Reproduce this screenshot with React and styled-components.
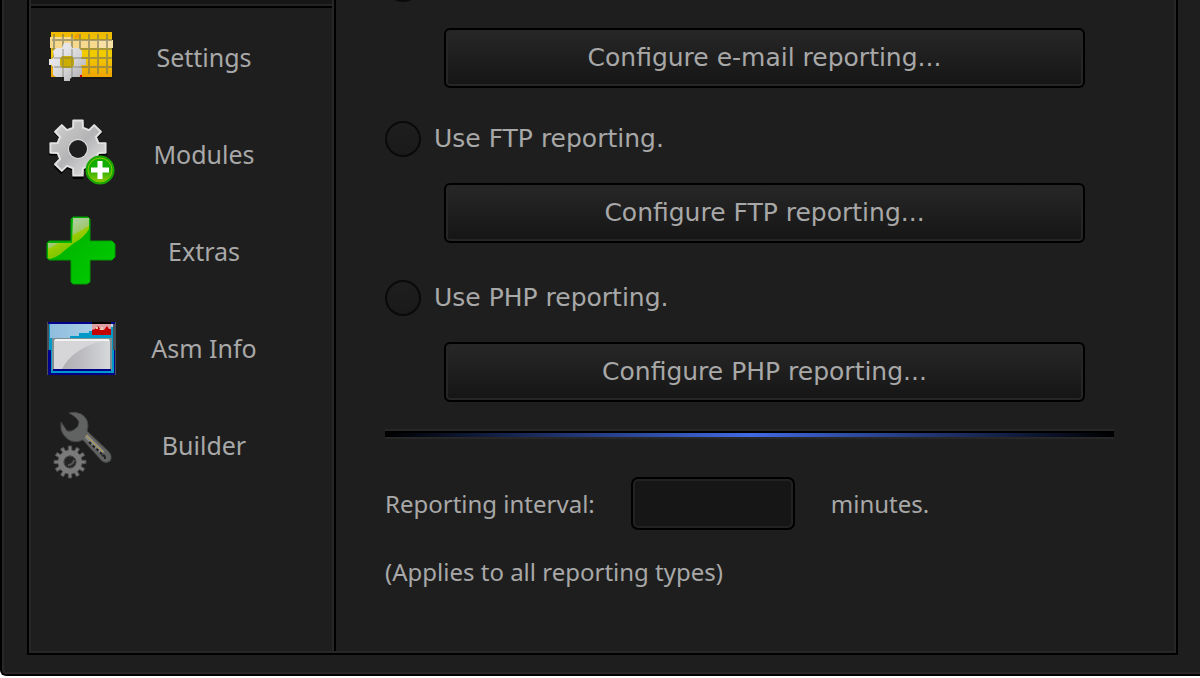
import React, { useState } from 'react'
import styled, { createGlobalStyle } from 'styled-components'

const GlobalStyle = createGlobalStyle`
  * {
    box-sizing: border-box;
  }

  body {
    margin: 0;
    background: #fff;
    color: #a8a8a8;
    font-family: "Noto Sans", "Open Sans", sans-serif;
    font-size: 24px;
    line-height: 34px;
    overflow: hidden;
  }
`;

const Window = styled.div`
  padding: 0 22px 19px 25px;
  background: #1e1e1e;
  border-left: 2px solid #000;
  border-bottom: 2px solid #000;
  border-bottom-left-radius: 6px;
  box-shadow: inset 2px -2px 0 #272727;
`;

const Panel = styled.div`
  display: flex;
  border: 2px solid #000;
  border-top: none;
`;

const Sidebar = styled.nav`
  flex: 0 0 305px;
  border: 2px solid #272727;
  border-top: none;
  box-shadow: 2px 0 0 #000;
`;

const PreviousTab = styled.div`
  height: 8px;
  background: #161616;
  border-bottom: 2px solid #000;
  box-shadow: inset 0 -2px 0 #242424;
`;

const Tab = styled.button`
  display: grid;
  grid-template-columns: 100px 146px;
  align-items: center;
  justify-items: center;
  width: 100%;
  height: 97px;
  padding: 0;
  border: none;
  background: none;
  color: inherit;
  font: inherit;
  font-size: 25px;
  cursor: pointer;
`;

const TabIcon = styled.svg`
  width: 72px;
  height: 72px;
`;

const Content = styled.main`
  flex: 1;
  display: flex;
  flex-direction: column;
  padding: 0 60px 62px 51px;
  border-right: 2px solid #272727;
  border-bottom: 2px solid #272727;
`;

const Option = styled.label`
  display: flex;
  align-items: center;
  gap: 13px;
  height: 36px;
  margin-top: ${(props) => props.$gap}px;
  font-family: "DejaVu Sans", sans-serif;
  font-size: 25px;
`;

const Radio = styled.input`
  appearance: none;
  width: 36px;
  height: 36px;
  margin: 0;
  border: 2px solid #0a0a0a;
  border-radius: 50%;
  background: linear-gradient(#1e1e1e, #1a1a1a);

  &:checked {
    background: radial-gradient(#4169e1 30%, #1a1a1a 40%);
  }
`;

const ConfigureButton = styled.button`
  height: 60px;
  margin: 26px 29px 0 59px;
  padding: 0 0 2px;
  border: 2px solid #000;
  border-radius: 6px;
  background: linear-gradient(#272727, #151515);
  box-shadow: inset 0 0 0 2px #262626;
  color: inherit;
  font-family: "DejaVu Sans", sans-serif;
  font-size: 25px;
  cursor: pointer;

  &:active {
    background: #151515;
  }
`;

const Divider = styled.hr`
  width: 100%;
  height: 10px;
  margin: 27px 0 0;
  border: 2px solid #272727;
  border-width: 2px 0;
  background: linear-gradient(#000, #000) top / 100% 2px no-repeat,
    linear-gradient(90deg, #000, #4169e1 50%, #000);
`;

const IntervalRow = styled.div`
  display: flex;
  align-items: center;
  gap: 36px;
  margin-top: 38px;
`;

const IntervalInput = styled.input`
  width: 164px;
  height: 53px;
  padding: 0 12px;
  border: 2px solid #000;
  border-radius: 7px;
  background: #161616;
  box-shadow: inset 0 0 0 2px #222;
  color: inherit;
  font: inherit;
  outline: none;
`;

const Note = styled.p`
  margin: 25px 0 0;
`;

// outline of a cog, four points for each tooth
const cog = (cx, cy, outer, inner, teeth, spread) => {
  const points = []
  const step = (Math.PI * 2) / teeth
  for (let i = 0; i < teeth; i++) {
    const mid = i * step - Math.PI / 2
    const corners = [
      [inner, -spread * 1.1],
      [outer, -spread * 0.8],
      [outer, spread * 0.8],
      [inner, spread * 1.1],
    ]
    corners.forEach(([r, offset]) => {
      const a = mid + offset * step
      points.push(`${(cx + r * Math.cos(a)).toFixed(1)} ${(cy + r * Math.sin(a)).toFixed(1)}`)
    })
  }
  return `M${points.join('L')}Z`
}

const circle = (cx, cy, r) => `M${cx - r} ${cy}a${r} ${r} 0 1 0 ${2 * r} 0a${r} ${r} 0 1 0 ${-2 * r} 0Z`

const SettingsIcon = () => (
  <TabIcon viewBox="0 0 72 72" aria-hidden="true">
    <defs>
      <linearGradient id="sheet" x1="0" y1="0" x2="0" y2="1">
        <stop offset="0" stopColor="#efb900" />
        <stop offset=".5" stopColor="#f2cc00" />
        <stop offset="1" stopColor="#eda400" />
      </linearGradient>
      <linearGradient id="sheetCog" x1="0" y1="0" x2="1" y2="1">
        <stop offset=".3" stopColor="#e6e6e8" />
        <stop offset=".6" stopColor="#d2d2d4" />
        <stop offset="1" stopColor="#a8a8aa" />
      </linearGradient>
    </defs>
    <path d="M6 11h61v45H6z" fill="url(#sheet)" />
    <path d="M5 16h22l3 3h38v8H5z" fill="#f6d98c" />
    <path d="M53 19h15v8H53z" fill="#f8e0a4" />
    <path d="M30 15l3-3 2 4-6 2z" fill="#f39a00" />
    <path
      d="M9 13v42M18 13v42M27 13v42M35 13v40M44 13v40M53 13v40M62 13v40M7 19h60M7 28h60M7 37h60M7 46h60"
      stroke="#77775c"
      strokeOpacity=".6"
      strokeWidth="2"
      fill="none"
    />
    <path
      d={`M19 22H25L27 27H34L37 30V35L36 38H41V44H36L37 48V53L34 56H27L25 58V60H19V56H11L8 54V46L7 44H4V38H7L9 36L8 30L11 27H17Z${circle(22, 41, 6)}`}
      fill="url(#sheetCog)"
      fillRule="evenodd"
    />
    <path d="M17 35h10l2 3v6l-2 3H17l-2-3v-6z" fill="#ccae00" />
    <path
      d="M18 28v28M27 28v28M9 37h28M9 46h28"
      stroke="#77776c"
      strokeOpacity=".4"
      strokeWidth="2"
      fill="none"
    />
    <path d="M35 54h2v2h-2z" fill="#d40000" />
    <path d="M38 57h30" stroke="#111" strokeWidth="1" />
  </TabIcon>
)

const ModulesIcon = () => (
  <TabIcon viewBox="0 0 72 72" aria-hidden="true">
    <defs>
      <linearGradient id="moduleCog" x1="0" y1="0" x2="1" y2="1">
        <stop offset="0" stopColor="#d2d2d2" />
        <stop offset=".5" stopColor="#b4b4b6" />
        <stop offset="1" stopColor="#ededed" />
      </linearGradient>
      <linearGradient id="badge" x1="0" y1="0" x2="0" y2="1">
        <stop offset=".45" stopColor="#11ad00" />
        <stop offset="1" stopColor="#9ccc00" />
      </linearGradient>
    </defs>
    <path
      d={cog(33, 31, 29, 21, 8, 0.27)}
      transform="translate(0 1)"
      fill="#000"
      stroke="#000"
      strokeWidth="1"
    />
    <path
      d={cog(33, 30, 28, 21, 8, 0.27) + circle(33, 31, 9)}
      fill="url(#moduleCog)"
      fillRule="evenodd"
      stroke="#e2e2e2"
      strokeWidth="2"
      strokeLinejoin="round"
    />
    <circle cx="33" cy="31" r="9" fill="#1e1e1e" />
    <circle cx="55" cy="52" r="13" fill="url(#badge)" stroke="#18a800" strokeWidth="3" />
    <circle cx="55" cy="52" r="12" fill="none" stroke="#8cc800" strokeWidth="1" />
    <path d="M55 43v18M46 52h18" stroke="#fff" strokeWidth="5" />
  </TabIcon>
)

const ExtrasIcon = () => (
  <TabIcon viewBox="0 0 72 72" aria-hidden="true">
    <defs>
      <linearGradient id="shine" gradientUnits="userSpaceOnUse" x1="18" y1="14" x2="27" y2="30">
        <stop offset="0" stopColor="#a9cd95" />
        <stop offset=".5" stopColor="#a0c870" />
        <stop offset=".6" stopColor="#98cc00" />
        <stop offset="1" stopColor="#84c800" />
      </linearGradient>
      <linearGradient id="plus" x1="0" y1="0" x2="1" y2="1">
        <stop offset=".3" stopColor="#00b400" />
        <stop offset="1" stopColor="#00d000" />
      </linearGradient>
    </defs>
    <path
      d="M28 2h15l2 2v22h22l3 3v13l-3 3H45v22l-3 2H28l-2-2V45H4l-2-2V28l2-2h22V4z"
      fill="url(#plus)"
    />
    <path d="M28 3h16v11q-5 9-15 14l-10 8q-6 6-14 8l-2-1V28h24z" fill="url(#shine)" />
    <path
      d="M28 2h15l2 2v22h22l3 3v13l-3 3H45v22l-3 2H28l-2-2V45H4l-2-2V28l2-2h22V4z"
      fill="none"
      stroke="#009d00"
      strokeWidth="1"
    />
  </TabIcon>
)

const AsmInfoIcon = () => (
  <TabIcon viewBox="0 0 72 72" aria-hidden="true">
    <defs>
      <linearGradient id="titleBar" x1="0" y1="0" x2="1" y2="0">
        <stop offset="0" stopColor="#8fbddd" />
        <stop offset="1" stopColor="#b4d6ea" />
      </linearGradient>
      <linearGradient id="pane" x1="0" y1="0" x2="1" y2="0">
        <stop offset="0" stopColor="#b0b0b2" />
        <stop offset=".4" stopColor="#bcbcc0" />
        <stop offset="1" stopColor="#d6d8da" />
      </linearGradient>
    </defs>
    <path d="M2 10h69v53H2z" fill="#4b5058" />
    <path d="M3 10h67v2H3zM3 38h3v23h62V38h2v25H3z" fill="#00008b" />
    <path d="M4 12h64v26h1v23H6V38H4z" fill="#009ac8" />
    <path d="M5 12h63v3h-2l-13 2v2h-9v2H34v3h-9v2H5z" fill="url(#titleBar)" />
    <path d="M47 10h19v2H47z" fill="#000" />
    <path d="M47 12h19v6H47z" fill="#dd9fa4" />
    <path d="M47 18l3-1 3-3 3 4h3l3-4 2 3h2v6H47z" fill="#c40000" />
    <path d="M54 17h2v-2h2v3h-3zM51 15h2v2h-2z" fill="#f0c8b0" />
    <path d="M7 26h60v32H7z" fill="#7d9096" />
    <path d="M9 28h56v29H9z" fill="#d6d6d8" />
    <path d="M17 57q10-20 40-28h8v28z" fill="url(#pane)" />
    <path d="M10 28h54" stroke="#f2f2f2" strokeWidth="2" />
    <path d="M8 58h58M3 62h67" stroke="#00008b" strokeWidth="2" />
  </TabIcon>
)

const BuilderIcon = () => (
  <TabIcon viewBox="0 0 72 72" aria-hidden="true">
    <path
      d="M24 4q6-2 12 1 7 4 7 12l-1 5 21 20q5 5 2 10-4 3-8 0L38 31q-6 3-12 1-8-4-10-12V13l6 9q5 1 8-2 4-2 4-7-1-3-5-6z"
      fill="#616363"
      stroke="#474747"
      strokeWidth="1"
    />
    <path d="M41 27l17 17" stroke="#8a8a88" strokeWidth="4" />
    <path d="M41 26l17 17" stroke="#b59a35" strokeWidth="1" />
    <path d="M44 33l14 13" stroke="#222" strokeWidth="2" strokeDasharray="3 2" />
    <path d="M57 47q3-2 3 3" stroke="#222" strokeWidth="2" fill="none" />
    <path
      d={cog(25, 53, 16, 12, 12, 0.24) + circle(25, 53, 6)}
      fill="#7a7a7a"
      fillRule="evenodd"
      stroke="#555"
      strokeWidth="1"
    />
    <circle cx="25" cy="53" r="6" fill="#242424" stroke="#484848" strokeWidth="1" />
    <path d="M23 56q5 0 6-5" stroke="#555" strokeWidth="2" fill="none" />
  </TabIcon>
)

const tabs = [
  { name: 'Settings', Icon: SettingsIcon },
  { name: 'Modules', Icon: ModulesIcon },
  { name: 'Extras', Icon: ExtrasIcon },
  { name: 'Asm Info', Icon: AsmInfoIcon },
  { name: 'Builder', Icon: BuilderIcon },
]

export default function App() {
  const [method, setMethod] = useState('')
  const [interval, setInterval] = useState('')

  const radioProps = (value) => ({
    type: 'radio',
    name: 'method',
    value,
    checked: method === value,
    onChange: () => setMethod(value),
  })

  return (
    <>
      <GlobalStyle />
      <Window>
        <Panel>
          <Sidebar>
            <PreviousTab />
            {tabs.map(({ name, Icon }) => (
              <Tab key={name} type="button">
                <Icon />
                <span>{name}</span>
              </Tab>
            ))}
          </Sidebar>
          <Content>
            {/* scrolled almost out of view */}
            <Option $gap={-34}>
              <Radio {...radioProps('email')} aria-label="E-mail" />
            </Option>
            <ConfigureButton type="button">Configure e-mail reporting...</ConfigureButton>
            <Option $gap={33}>
              <Radio {...radioProps('ftp')} />
              Use FTP reporting.
            </Option>
            <ConfigureButton type="button">Configure FTP reporting...</ConfigureButton>
            <Option $gap={37}>
              <Radio {...radioProps('php')} />
              Use PHP reporting.
            </Option>
            <ConfigureButton type="button">Configure PHP reporting...</ConfigureButton>
            <Divider />
            <IntervalRow>
              <label htmlFor="interval">Reporting interval:</label>
              <IntervalInput
                id="interval"
                value={interval}
                onChange={(e) => setInterval(e.target.value)}
              />
              <span>minutes.</span>
            </IntervalRow>
            <Note>(Applies to all reporting types)</Note>
          </Content>
        </Panel>
      </Window>
    </>
  )
}
